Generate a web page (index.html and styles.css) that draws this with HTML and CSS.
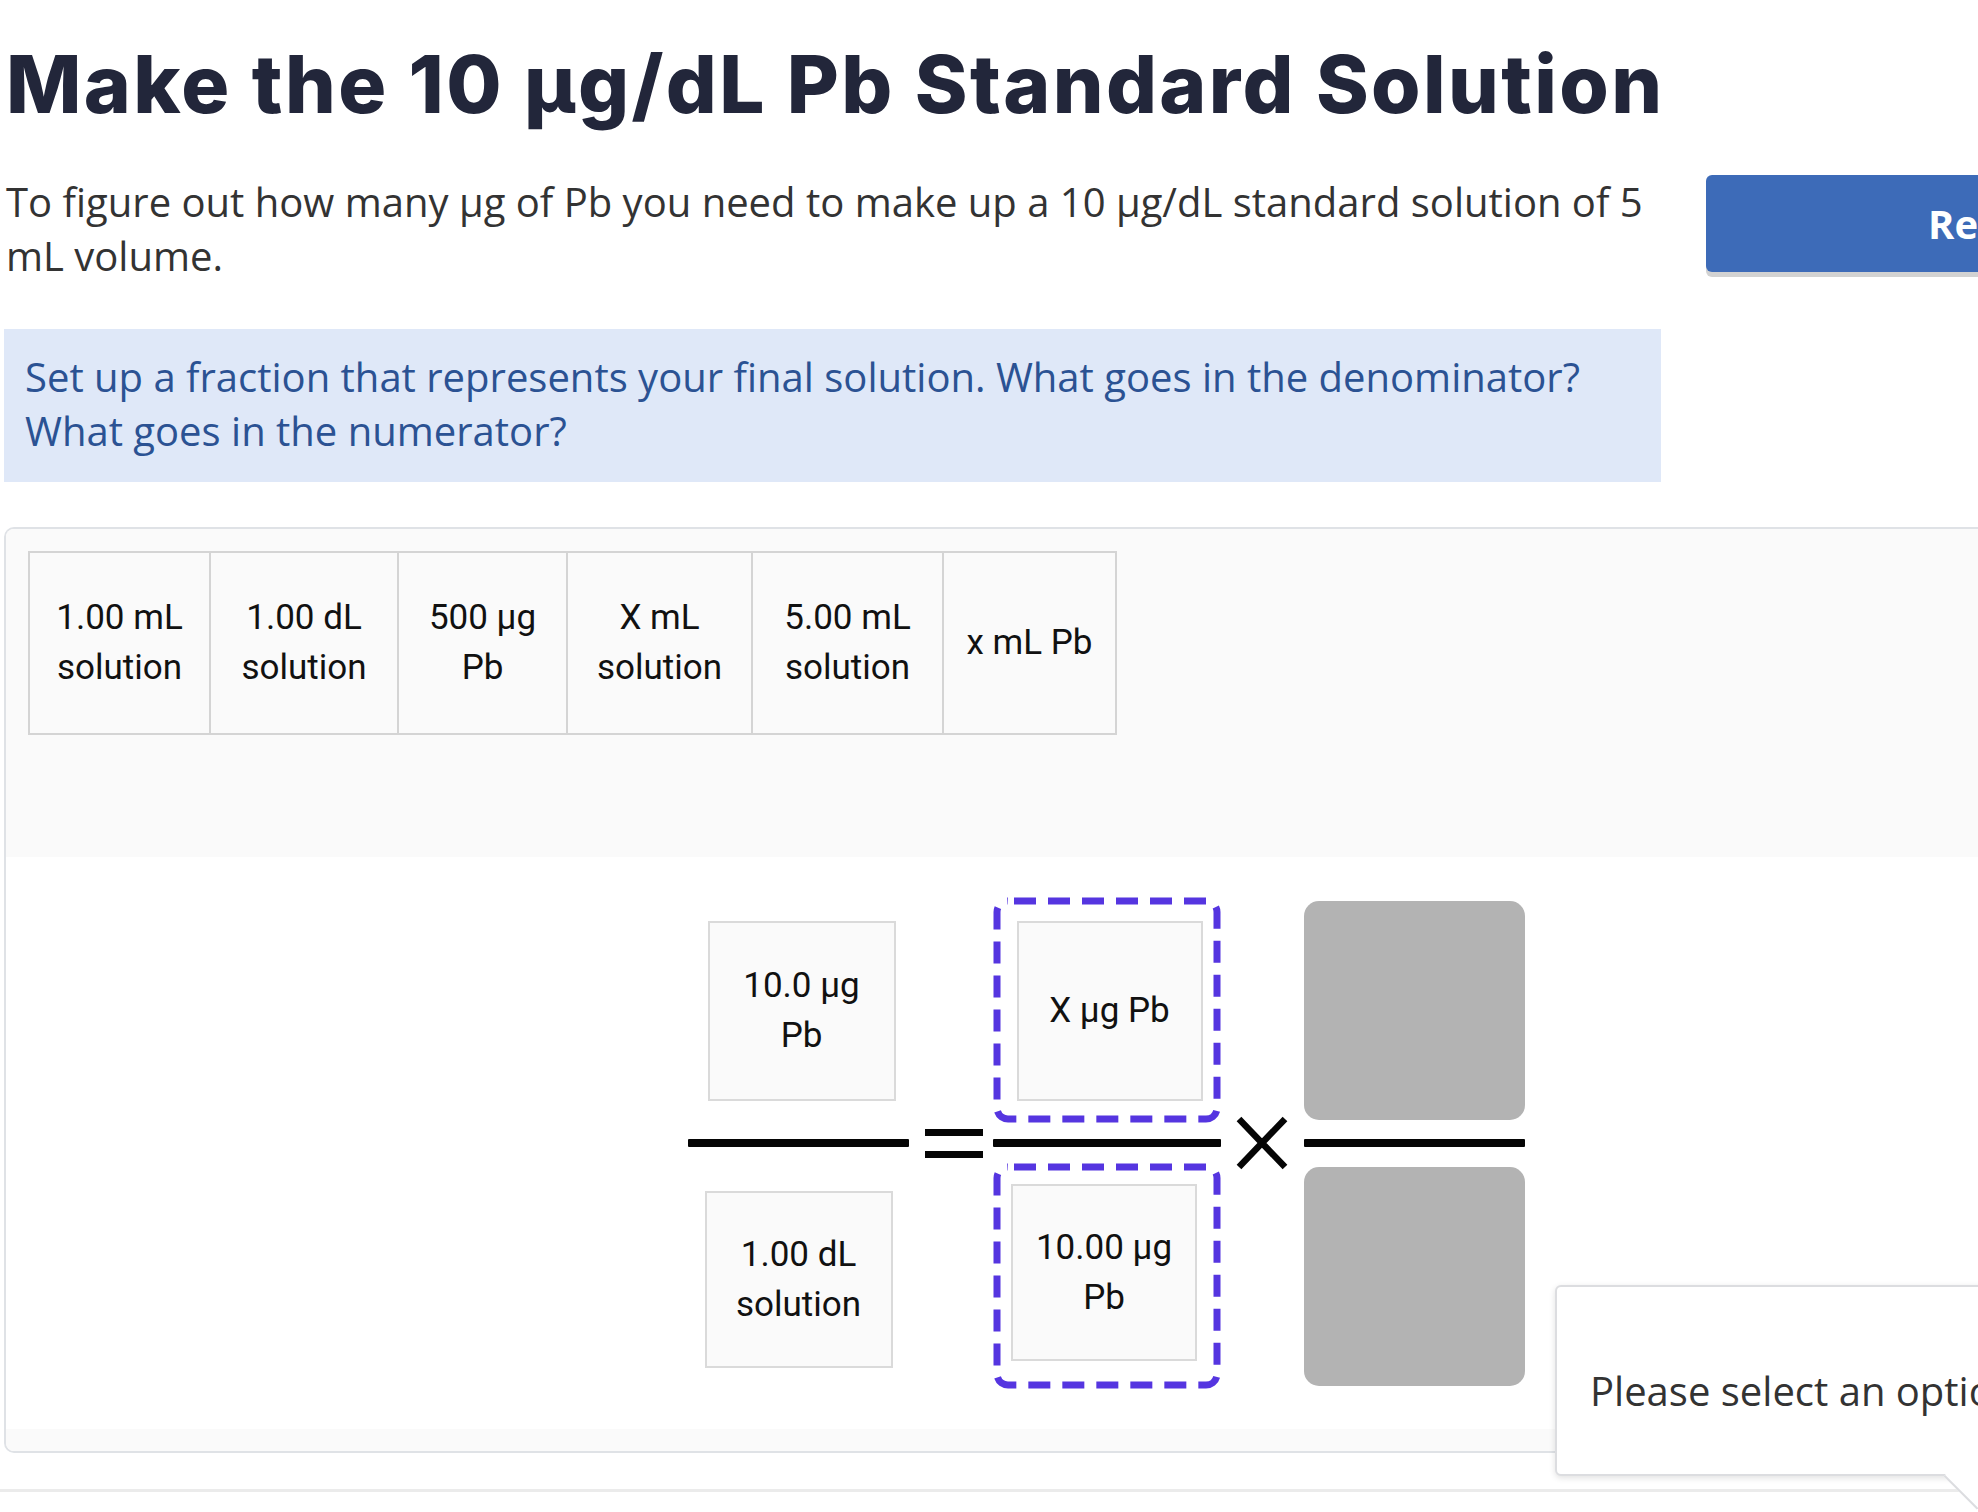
FILE: index.html
```html
<!DOCTYPE html>
<html lang="en">
<head>
<meta charset="utf-8">
<title>Make the 10 µg/dL Pb Standard Solution</title>
<link rel="stylesheet" href="styles.css">
</head>
<body>
<div class="page">
  <div class="top">
    <div class="main">
      <h1 class="title">Make the 10 µg/dL Pb Standard Solution</h1>
      <p class="intro">To figure out how many µg of Pb you need to make up a 10 µg/dL standard solution of 5 mL volume.</p>
      <div class="hint">Set up a fraction that represents your final solution. What goes in the denominator? What goes in the numerator?</div>
    </div>
    <div class="side">
      <button class="btn">Reset</button>
    </div>
  </div>

  <div class="panel">
    <div class="tray">
      <div class="tile">1.00 mL<br>solution</div>
      <div class="tile">1.00 dL<br>solution</div>
      <div class="tile">500 µg<br>Pb</div>
      <div class="tile">X mL<br>solution</div>
      <div class="tile">5.00 mL<br>solution</div>
      <div class="tile">x mL Pb</div>
    </div>
    <div class="stage">
      <div class="fraction f1">
        <div class="slot num"><div class="tile eq">10.0 µg<br>Pb</div></div>
        <div class="bar"></div>
        <div class="slot den"><div class="tile eq">1.00 dL<br>solution</div></div>
      </div>
      <div class="equals"><span></span><span></span></div>
      <div class="fraction f2">
        <div class="slot drop num">
          <svg class="dash" viewBox="0 0 228 226" width="228" height="226"><rect x="4" y="4" width="220" height="218" rx="11"/></svg>
          <div class="tile eq">X µg Pb</div>
        </div>
        <div class="bar"></div>
        <div class="slot drop den">
          <svg class="dash" viewBox="0 0 228 226" width="228" height="226"><rect x="4" y="4" width="220" height="218" rx="11"/></svg>
          <div class="tile eq">10.00 µg<br>Pb</div>
        </div>
      </div>
      <div class="times">
        <svg viewBox="0 0 56 58" width="56" height="58"><path d="M5 5 L51 53 M51 5 L5 53"/></svg>
      </div>
      <div class="fraction f3">
        <div class="slot"><div class="empty"></div></div>
        <div class="bar"></div>
        <div class="slot"><div class="empty"></div></div>
      </div>
    </div>
    <div class="strip"></div>
  </div>
  <div class="divider"></div>

  <div class="tooltip">Please select an option</div>
</div>
</body>
</html>
```

FILE: styles.css
```css
html, body {
  margin: 0;
  padding: 0;
  background: #ffffff;
}
body {
  overflow: hidden;
  width: 1978px;
  height: 1512px;
}
.page {
  position: relative;
  padding: 37px 0 0 4px;
  font-family: "Open Sans", "Noto Sans", sans-serif;
}
.top {
  display: flex;
  align-items: flex-start;
}
.main {
  width: 1657px;
  flex-shrink: 0;
}
.side {
  flex-shrink: 0;
  margin-left: 45px;
  padding-top: 138px;
}
.title {
  margin: 0 0 0 2px;
  font-family: Inter, "Noto Sans", sans-serif;
  font-weight: 800;
  font-size: 80px;
  line-height: 94px;
  color: #22263a;
  letter-spacing: 2.4px;
  white-space: nowrap;
}
.intro {
  margin: 44px 0 0 2px;
  font-size: 40px;
  line-height: 54px;
  color: #333333;
}
.hint {
  margin-top: 46px;
  background: #dfe8f8;
  color: #2b5293;
  font-size: 40px;
  line-height: 54px;
  padding: 21px 20px 24px 21px;
}
.btn {
  display: block;
  width: 520px;
  height: 97px;
  border: 0;
  border-radius: 6px;
  background: #3d6bb8;
  box-shadow: 0 5px 0 #d2d2d2;
  color: #ffffff;
  font-family: "Open Sans", "Noto Sans", sans-serif;
  font-weight: 700;
  font-size: 40px;
  line-height: 97px;
  text-align: left;
  padding: 0 0 0 222px;
}

.panel {
  margin-top: 45px;
  width: 2300px;
  border: 2.5px solid #dfe2e6;
  border-right: 0;
  border-radius: 10px 0 0 10px;
  background: #ffffff;
  overflow: hidden;
}
.tray {
  background: #fafafa;
  display: flex;
  align-items: flex-start;
  padding: 22px 0 0 22px;
  height: 306px;
  box-sizing: content-box;
}
.tile {
  box-sizing: border-box;
  height: 184px;
  padding: 0;
  border: 2px solid #d4d4d4;
  background: #fafafa;
  display: flex;
  align-items: center;
  justify-content: center;
  text-align: center;
  font-family: Roboto, "Noto Sans", sans-serif;
  font-size: 35px;
  line-height: 50px;
  color: #111111;
  white-space: nowrap;
}
.tray .tile + .tile {
  border-left: 0;
}
.tray .tile:nth-child(1) { width: 183px; }
.tray .tile:nth-child(2) { width: 188px; }
.tray .tile:nth-child(3) { width: 169px; }
.tray .tile:nth-child(4) { width: 185px; }
.tray .tile:nth-child(5) { width: 191px; }
.tray .tile:nth-child(6) { width: 173px; }

.stage {
  display: flex;
  align-items: center;
  padding: 40px 0 40px 682px;
  background: #ffffff;
}
.fraction {
  display: flex;
  flex-direction: column;
  align-items: center;
  gap: 16px;
}
.f1 { width: 221px; }
.f2 { width: 228px; }
.f3 { width: 221px; }
.slot {
  position: relative;
  box-sizing: border-box;
  width: 100%;
  height: 226px;
  display: flex;
  align-items: center;
  justify-content: center;
}
.f1 .slot.num { padding: 24px 0 0 6px; align-items: flex-start; }
.f1 .slot.den { padding: 28px 0 0 0; align-items: flex-start; }
.slot.drop.num { padding: 24px 0 0 5px; align-items: flex-start; }
.slot.drop.den { padding: 21px 6px 0 0; align-items: flex-start; }
.tile.eq {
  height: 180px;
  width: 188px;
  padding: 0;
  border-width: 2px;
  border-color: #dadada;
}
.slot.den .tile.eq { height: 177px; }
.slot.drop .tile.eq { width: 186px; }
.dash {
  position: absolute;
  left: 0;
  top: 0;
}
.dash rect {
  fill: none;
  stroke: #5535e0;
  stroke-width: 7;
  stroke-dasharray: 22 12;
  stroke-dashoffset: -6;
}
.bar {
  width: 100%;
  height: 8px;
  background: #050505;
  border-radius: 1px;
}
.equals {
  display: flex;
  flex-direction: column;
  gap: 15px;
  margin: 0 10px 0 16px;
}
.equals span {
  display: block;
  width: 58px;
  height: 7px;
  background: #050505;
}
.times {
  margin: 0 14px 0 13px;
  display: flex;
}
.times path {
  stroke: #050505;
  stroke-width: 6.5;
  fill: none;
}
.empty {
  width: 221px;
  height: 219px;
  border-radius: 15px;
  background: #b3b3b3;
}
.strip {
  height: 22px;
  background: #fafafa;
}
.divider {
  margin-top: 36px;
  height: 3px;
  background: #ebebeb;
  margin-left: -4px;
}
.tooltip {
  position: absolute;
  left: 1555px;
  top: 1285px;
  width: 520px;
  height: 191px;
  box-sizing: border-box;
  background: #ffffff;
  border: 2px solid #dcdde0;
  border-radius: 6px;
  box-shadow: 0 2px 6px rgba(0, 0, 0, 0.12);
  padding: 20px 0 0 33px;
  display: flex;
  align-items: center;
  font-size: 40px;
  color: #333333;
  white-space: nowrap;
}
.tooltip::after {
  content: "";
  position: absolute;
  left: 397px;
  top: 164px;
  width: 47px;
  height: 47px;
  background: #ffffff;
  border-bottom: 2px solid #dcdde0;
  transform: rotate(45deg);
}
```
